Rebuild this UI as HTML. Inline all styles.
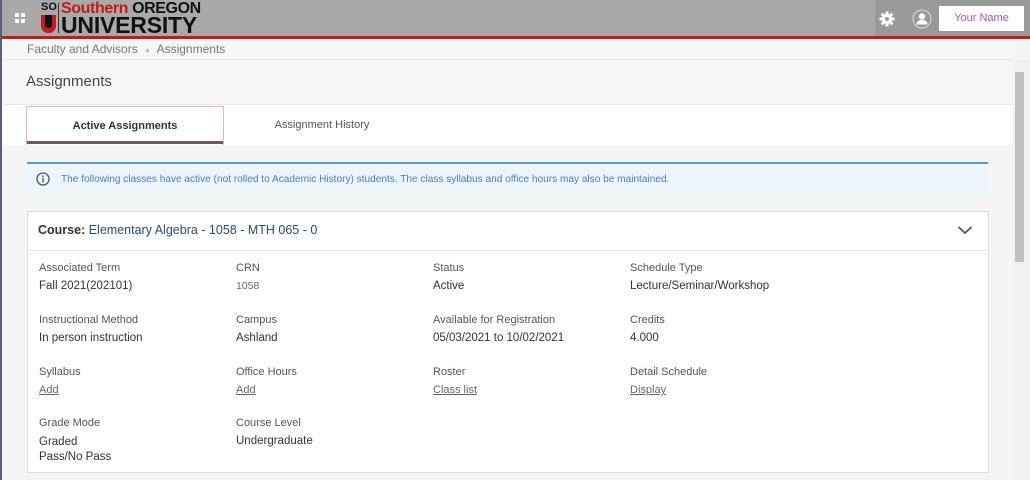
<!DOCTYPE html>
<html><head><style>
*{margin:0;padding:0;box-sizing:border-box}
body{width:1030px;height:480px;overflow:hidden;background:#f4f5f5;font-family:"Liberation Sans",sans-serif;position:relative;color:#333}
.a{position:absolute}
.lbl{font-size:11px;color:#555}
.val{font-size:11.5px;color:#333}
.lnk{font-size:11px;color:#666;text-decoration:underline}
</style></head><body>
<div class="a" style="left:0;top:0;width:1030px;height:36px;background:#a9a9a9"></div>
<div class="a" style="left:875px;top:0;width:155px;height:36px;background:#999"></div>
<div class="a" style="left:0;top:36px;width:1030px;height:3px;background:#c41a1a"></div>
<div class="a" style="left:15px;top:13px;width:10px;height:10px;display:grid;grid-template-columns:4px 4px;gap:2px"><i style="background:#fff"></i><i style="background:#fff"></i><i style="background:#fff"></i><i style="background:#fff"></i></div>
<div class="a" style="left:41px;top:2px;font:900 11px 'Liberation Sans';color:#111;line-height:11px">SO</div>
<div class="a" style="left:41px;top:15px;width:15px;height:18px;background:#c41a1a;border-radius:0 0 7px 7px"></div>
<div class="a" style="left:45px;top:15px;width:7px;height:13px;background:#111;border-radius:0 0 3px 3px"></div>
<div class="a" style="left:58px;top:3px;width:1px;height:30px;background:#333"></div>
<div class="a" style="left:61px;top:1px;font:700 16px 'Liberation Sans';color:#c41a1a;line-height:16px;letter-spacing:-.4px">Southern <span style="color:#111">OREGON</span></div>
<div class="a" style="left:61px;top:14px;font:900 23px 'Liberation Sans';color:#111;line-height:22px;letter-spacing:-.2px">UNIVERSITY</div>
<svg class="a" style="left:879px;top:11px" width="16" height="16" viewBox="0 0 16 16"><g fill="#fff"><circle cx="8" cy="8" r="5"/><rect x="6.5" y="0.5" width="3" height="15"/><rect x="0.5" y="6.5" width="15" height="3"/><rect x="6.5" y="0.5" width="3" height="15" transform="rotate(45 8 8)"/><rect x="6.5" y="0.5" width="3" height="15" transform="rotate(-45 8 8)"/></g><circle cx="8" cy="8" r="2" fill="#999"/></svg>
<svg class="a" style="left:912px;top:9px" width="20" height="20" viewBox="0 0 20 20"><circle cx="10" cy="10" r="9" fill="none" stroke="#ddd" stroke-width="1"/><circle cx="10" cy="7.5" r="3.2" fill="#fff"/><path d="M4.5 15.5c0-3 2.5-4.5 5.5-4.5s5.5 1.5 5.5 4.5z" fill="#fff"/></svg>
<div class="a" style="left:939px;top:6px;width:85px;height:25px;background:#fff;color:#b04fb7;font-size:11px;text-align:center;line-height:25px">Your Name</div>
<div class="a" style="left:0;top:39px;width:1013px;height:21px;background:#f7f7f7;border-bottom:1px solid #e6e6e6;font-size:12px;color:#777;padding-left:27px;line-height:20px">Faculty and Advisors <span style="font-size:8px;color:#bbb;margin:0 4px">●</span> Assignments</div>
<div class="a" style="left:0;top:60px;width:1013px;height:45px;background:#f7f7f7;border-bottom:1px solid #e8e8e8;font-size:15px;color:#444;padding-left:26px;line-height:44px">Assignments</div>
<div class="a" style="left:0;top:105px;width:1013px;height:40px;background:#fff"></div>
<div class="a" style="left:26px;top:106px;width:198px;height:39px;border:1px solid #f0b0b0;border-bottom:none;font-size:11px;font-weight:bold;color:#333;text-align:center;line-height:38px">Active Assignments</div>
<div class="a" style="left:27px;top:141px;width:196px;height:3px;background:#6b5c58"></div>
<div class="a" style="left:222px;top:106px;width:200px;height:39px;font-size:11px;color:#555;text-align:center;line-height:38px">Assignment History</div>
<div class="a" style="left:27px;top:162px;width:961px;height:33px;background:#eef5fc;border-top:2px solid #5b9bd5"></div>
<svg class="a" style="left:36px;top:172px" width="14" height="14" viewBox="0 0 14 14"><circle cx="7" cy="7" r="6" fill="none" stroke="#555" stroke-width="1.3"/><rect x="6.3" y="6" width="1.4" height="4.5" fill="#555"/><rect x="6.3" y="3.5" width="1.4" height="1.5" fill="#555"/></svg>
<div class="a" style="left:61px;top:174px;font-size:10.1px;color:#4a80b8">The following classes have active (not rolled to Academic History) students. The class syllabus and office hours may also be maintained.</div>
<div class="a" style="left:27px;top:211px;width:962px;height:262px;background:#fff;border:1px solid #ddd"></div>
<div class="a" style="left:27px;top:250px;width:962px;height:1px;background:#e4e4e4"></div>
<div class="a" style="left:38px;top:223px;font-size:12.5px;color:#333"><b>Course:</b> <span style="color:#2c4a6b">Elementary Algebra - 1058 - MTH 065 - 0</span></div>
<svg class="a" style="left:957px;top:224px" width="16" height="12" viewBox="0 0 16 12"><path d="M1.5 3l6.5 6 6.5-6" fill="none" stroke="#555" stroke-width="1.8"/></svg>

<div class="a lbl" style="left:39px;top:262px">Associated Term</div><div class="a val" style="left:39px;top:280px">Fall 2021(202101)</div>
<div class="a lbl" style="left:236px;top:262px">CRN</div><div class="a val" style="left:236px;top:280px;font-size:10.5px;color:#666">1058</div>
<div class="a lbl" style="left:433px;top:262px">Status</div><div class="a val" style="left:433px;top:280px">Active</div>
<div class="a lbl" style="left:630px;top:262px">Schedule Type</div><div class="a val" style="left:630px;top:280px">Lecture/Seminar/Workshop</div>

<div class="a lbl" style="left:39px;top:314px">Instructional Method</div><div class="a val" style="left:39px;top:332px">In person instruction</div>
<div class="a lbl" style="left:236px;top:314px">Campus</div><div class="a val" style="left:236px;top:332px">Ashland</div>
<div class="a lbl" style="left:433px;top:314px">Available for Registration</div><div class="a val" style="left:433px;top:332px">05/03/2021 to 10/02/2021</div>
<div class="a lbl" style="left:630px;top:314px">Credits</div><div class="a val" style="left:630px;top:332px">4.000</div>

<div class="a lbl" style="left:39px;top:366px">Syllabus</div><div class="a lnk" style="left:39px;top:384px">Add</div>
<div class="a lbl" style="left:236px;top:366px">Office Hours</div><div class="a lnk" style="left:236px;top:384px">Add</div>
<div class="a lbl" style="left:433px;top:366px">Roster</div><div class="a lnk" style="left:433px;top:384px">Class list</div>
<div class="a lbl" style="left:630px;top:366px">Detail Schedule</div><div class="a lnk" style="left:630px;top:384px">Display</div>

<div class="a lbl" style="left:39px;top:417px">Grade Mode</div><div class="a val" style="left:39px;top:435px;line-height:15px">Graded<br>Pass/No Pass</div>
<div class="a lbl" style="left:236px;top:417px">Course Level</div><div class="a val" style="left:236px;top:435px">Undergraduate</div>

<div class="a" style="left:1013px;top:60px;width:17px;height:420px;background:#f1f1f1"></div>
<div class="a" style="left:1015px;top:72px;width:9px;height:190px;background:#c1c1c1"></div>
<div class="a" style="left:0;top:0;width:2px;height:480px;background:#56607a"></div>
</body></html>
